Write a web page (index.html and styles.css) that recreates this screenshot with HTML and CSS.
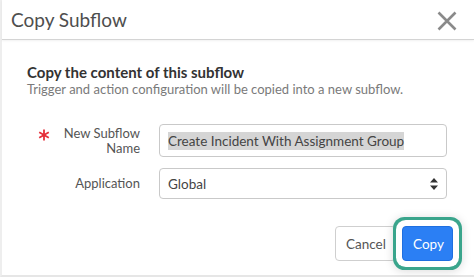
FILE: index.html
```html
<!DOCTYPE html>
<html>
<head>
	<meta charset="utf-8" />
	<title>Copy Subflow</title>
	<link rel="stylesheet" href="styles.css">
</head>
<body>
<div class="modal">
	<div class="modal-header">
		<h1 class="modal-title">Copy Subflow</h1>
		<button class="close" type="button" aria-label="Close">
			<svg width="20" height="20" viewBox="0 0 20 20">
				<path d="M1.5 1.5 L18.5 18.5 M18.5 1.5 L1.5 18.5" stroke="#8a8a8a" stroke-width="2.6" fill="none" />
			</svg>
		</button>
	</div>

	<div class="modal-body">
		<h2 class="intro">Copy the content of this subflow</h2>
		<p class="hint">Trigger and action configuration will be copied into a new subflow.</p>

		<form class="fields">
			<label class="field-label" for="name">
				<svg class="required" width="12" height="12" viewBox="0 0 12 12">
					<path d="M6 0.5 V11.5 M1.2 3.2 L10.8 8.8 M10.8 3.2 L1.2 8.8" stroke="#e5303a" stroke-width="1.8" fill="none" />
				</svg>
				<span>New Subflow<br />Name</span>
			</label>
			<div class="input"><span class="selected">Create Incident With Assignment Group</span></div>

			<label class="field-label app" for="app">Application</label>
			<div class="select">
				<span>Global</span>
				<svg class="arrows" width="8" height="12" viewBox="0 0 8 12">
					<path d="M4 0 L8 4.5 L0 4.5 Z M4 12 L8 7.5 L0 7.5 Z" fill="#333" />
				</svg>
			</div>
		</form>
	</div>

	<div class="modal-footer">
		<button class="btn btn-default" type="button">Cancel</button>
		<button class="btn btn-primary" type="button">Copy</button>
	</div>
</div>
</body>
</html>
```

FILE: styles.css
```css
body {
	margin: 0;
	background-color: #fff;
	font-family: Lato, "Noto Sans", sans-serif;
	color: #555;
}
.modal {
	width: 474px;
	height: 277px;
	box-sizing: border-box;
	border-left: 2px solid #eee;
	border-bottom: 2px solid #e6e6e6;
	background-color: #fff;
}
.modal-header {
	display: flex;
	align-items: center;
	justify-content: space-between;
	height: 40px;
	box-sizing: border-box;
	padding: 0 17px 0 9px;
	border-bottom: 1px solid #d4d4d4;
	box-shadow: 0 1px 2px rgba(0, 0, 0, 0.06);
}
.modal-title {
	margin: 0;
	font-size: 19px;
	font-weight: normal;
	color: #4e4e4e;
}
.close {
	border: none;
	background: none;
	padding: 0;
	margin-top: 2px;
	width: 20px;
	height: 20px;
}
.modal-body {
	padding: 24px 29px 0 25px;
}
.intro {
	margin: 0 0 2px 0;
	font-size: 15px;
	font-weight: bold;
	color: #333;
	line-height: 16px;
}
.hint {
	margin: 0;
	font-size: 13px;
	color: #7a7a7a;
	line-height: 15px;
}
.fields {
	display: grid;
	grid-template-columns: 113px 288px;
	column-gap: 19px;
	row-gap: 11px;
	margin-top: 27px;
	align-items: center;
}
.field-label {
	display: flex;
	justify-content: flex-end;
	align-items: flex-start;
	text-align: right;
	font-size: 13px;
	line-height: 15px;
	color: #555;
}
.required {
	flex: none;
	margin: 3px 14px 0 0;
}
.input, .select {
	box-sizing: border-box;
	border: 1px solid #c9c9c9;
	border-radius: 4px;
	font-size: 13.5px;
	color: #444;
	display: flex;
	align-items: center;
	padding: 0 8px 0 8px;
}
.input {
	height: 33px;
}
.select {
	height: 31px;
	justify-content: space-between;
}
.selected {
	background-color: #d5d5d5;
	padding: 1px 0;
}
.modal-footer {
	display: flex;
	justify-content: flex-end;
	gap: 6px;
	padding: 27px 21px 0 0;
}
.btn {
	height: 35px;
	box-sizing: border-box;
	border-radius: 4px;
	font-family: Lato, "Noto Sans", sans-serif;
	font-size: 13.5px;
	padding: 0 10px;
}
.btn-default {
	background-color: #fff;
	border: 1px solid #cfcfcf;
	color: #555;
	width: 61px;
}
.btn-primary {
	background-color: #2b7ff4;
	border: 1px solid #1f6fe0;
	color: #fff;
	width: 51px;
	box-shadow: 0 0 0 6px #fff, 0 0 0 9px #3aa58c, 0 1px 10px 9px rgba(0, 0, 0, 0.15);
}
```
